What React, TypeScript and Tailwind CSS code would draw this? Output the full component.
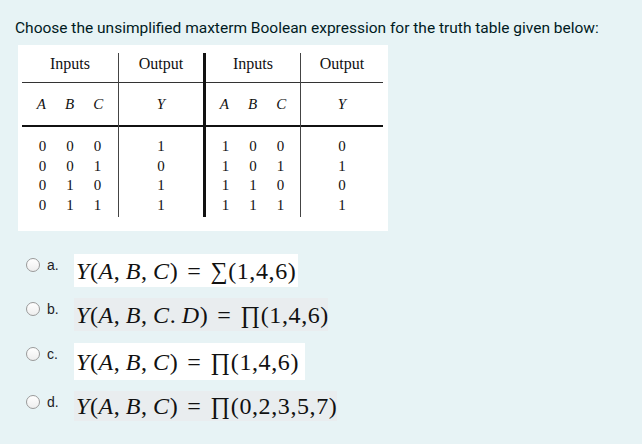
import React from "react";

const LEFT_ROWS = [
  ["0", "0", "0", "1"],
  ["0", "0", "1", "0"],
  ["0", "1", "0", "1"],
  ["0", "1", "1", "1"],
];

const RIGHT_ROWS = [
  ["1", "0", "0", "0"],
  ["1", "0", "1", "1"],
  ["1", "1", "0", "0"],
  ["1", "1", "1", "1"],
];

const serif = "font-['Liberation_Serif','Times_New_Roman',serif]";

function InputsCol({ rows, thick }: { rows: string[][]; thick?: boolean }) {
  return (
    <div className={`flex flex-col ${thick ? "border-l-[3px] border-[#111]" : ""}`}>
      <div className="h-[30px] border-b border-[#333] flex items-center justify-center pb-[8px] text-[16px]">Inputs</div>
      <div className="h-[44px] border-b-2 border-[#111] flex items-center justify-center gap-[19px] italic text-[15px]">
        <span>A</span>
        <span>B</span>
        <span>C</span>
      </div>
      <div className="flex flex-col pt-[10px] pb-[2px] text-[15px]">
        {rows.map((r, i) => (
          <div key={i} className="h-[19.5px] flex items-center justify-center gap-[20px] leading-none">
            <span>{r[0]}</span>
            <span>{r[1]}</span>
            <span>{r[2]}</span>
          </div>
        ))}
      </div>
    </div>
  );
}

function OutputCol({ rows }: { rows: string[][] }) {
  return (
    <div className="flex flex-col border-l border-[#444]">
      <div className="h-[30px] border-b border-[#333] flex items-center justify-center pb-[8px] text-[16px]">Output</div>
      <div className="h-[44px] border-b-2 border-[#111] flex items-center justify-center italic text-[15px]">Y</div>
      <div className="flex flex-col pt-[10px] pb-[2px] text-[15px]">
        {rows.map((r, i) => (
          <div key={i} className="h-[19.5px] flex items-center justify-center leading-none">
            {r[3]}
          </div>
        ))}
      </div>
    </div>
  );
}

function Radio() {
  return (
    <span className="w-[14px] h-[14px] rounded-full border border-[#9a9a9a] bg-gradient-to-b from-white to-[#eeeeee] shrink-0" />
  );
}

function MathExpr({ args, op, list }: { args: string[]; op: string; list: string }) {
  return (
    <span className={`${serif} text-[24px] tracking-[0.6px] text-[#111] whitespace-nowrap`}>
      <span className="italic">Y</span>(
      {args.map((a, i) => (
        <React.Fragment key={i}>
          <span className="italic">{a}</span>
          {i < args.length - 1 ? (i === 2 && args.length === 4 ? <span>.&thinsp;</span> : <span>,&thinsp;</span>) : null}
        </React.Fragment>
      ))}
      )<span className="mx-[9px]">=</span>
      <span>{op}</span>({list})
    </span>
  );
}

const OPTIONS = [
  { key: "a.", args: ["A", "B", "C"], op: "∑", list: "1,4,6", bg: "bg-white", cls: "h-[33px] w-[224px]" },
  { key: "b.", args: ["A", "B", "C", "D"], op: "∏", list: "1,4,6", bg: "bg-[#e9edef]", cls: "h-[33px] w-[254px]" },
  { key: "c.", args: ["A", "B", "C"], op: "∏", list: "1,4,6", bg: "bg-white", cls: "h-[37px] w-[231px]" },
  { key: "d.", args: ["A", "B", "C"], op: "∏", list: "0,2,3,5,7", bg: "bg-[#e9edef]", cls: "h-[30px] w-[263px]" },
];

export default function App() {
  return (
    <div className="w-[642px] h-[444px] bg-[#e7f3f5] text-[#001a1e] overflow-hidden font-['Roboto','Liberation_Sans',sans-serif]">
      <div className="pt-[17px] pl-[15px] text-[15.5px] leading-[22px]">
        Choose the unsimplified maxterm Boolean expression for the truth table given below:
      </div>

      {/* Truth table image */}
      <div className={`${serif} ml-[18px] mt-[6px] w-[370px] h-[186px] bg-white text-[#111] px-[4px] pt-[8px]`}>
        <div className="grid grid-cols-[96px_85px_97px_83px]">
          <InputsCol rows={LEFT_ROWS} />
          <OutputCol rows={LEFT_ROWS} />
          <InputsCol rows={RIGHT_ROWS} thick />
          <OutputCol rows={RIGHT_ROWS} />
        </div>
      </div>

      <div className="mt-[23px] flex flex-col">
        {OPTIONS.map((o, i) => (
          <div key={o.key} className={`flex items-start pl-[26px] ${i > 0 ? (i === 2 ? "mt-[12px]" : "mt-[11px]") : ""}`}>
            <div className="flex items-center gap-[7px] mt-[4px] h-[14px] w-[48px]">
              <Radio />
              <span className="font-['Liberation_Sans',Arial,sans-serif] text-[14px] leading-[14px] text-[#1d2125]">{o.key}</span>
            </div>
            <div className={`${o.bg} ${o.cls} flex items-center pl-[2px]`}>
              <MathExpr args={o.args} op={o.op} list={o.list} />
            </div>
          </div>
        ))}
      </div>
    </div>
  );
}
